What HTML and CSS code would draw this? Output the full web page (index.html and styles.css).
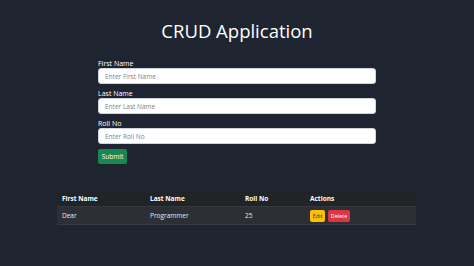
FILE: index.html
```html
<!DOCTYPE html>
<html>
<head>
<meta charset="utf-8">
<link rel="stylesheet" href="styles.css">
</head>
<body>
<div class="page">
  <h1 class="title">CRUD Application</h1>
  <form class="form">
    <label class="field">
      <span class="label">First Name</span>
      <input class="input" type="text" placeholder="Enter First Name">
    </label>
    <label class="field">
      <span class="label">Last Name</span>
      <input class="input" type="text" placeholder="Enter Last Name">
    </label>
    <label class="field">
      <span class="label">Roll No</span>
      <input class="input" type="text" placeholder="Enter Roll No">
    </label>
    <button class="btn btn-submit" type="button">Submit</button>
  </form>
  <table class="table">
    <thead>
      <tr><th class="c1">First Name</th><th class="c2">Last Name</th><th class="c3">Roll No</th><th class="c4">Actions</th></tr>
    </thead>
    <tbody>
      <tr><td>Dear</td><td>Programmer</td><td>25</td><td><span class="actions"><button class="btn btn-edit" type="button">Edit</button><button class="btn btn-delete" type="button">Delete</button></span></td></tr>
    </tbody>
  </table>
</div>
</body>
</html>
```
FILE: styles.css
```css
html, body {
  margin: 0;
  padding: 0;
  background: #1e2430;
  height: 100%;
}
body {
  font-family: "Open Sans", "Noto Sans", sans-serif;
  color: #ffffff;
}
.page {
  display: flex;
  flex-direction: column;
  align-items: center;
}
.title {
  margin: 18px 0 0 0;
  font-size: 18.5px;
  font-weight: 400;
  line-height: 26px;
}
.form {
  width: 278px;
  margin: 15px 0 0 98px;
  display: flex;
  flex-direction: column;
  align-self: flex-start;
}
.field {
  display: flex;
  flex-direction: column;
  margin-bottom: 5px;
}
.label {
  font-size: 7px;
  line-height: 9px;
}
.input {
  height: 16px;
  box-sizing: border-box;
  border: 1px solid #ced4da;
  border-radius: 3px;
  background: #ffffff;
  font-family: inherit;
  font-size: 6.5px;
  padding: 0 6px;
  outline: none;
}
.input::placeholder {
  color: #7d848b;
}
.btn {
  font-family: inherit;
  border: none;
  border-radius: 2px;
  cursor: pointer;
  padding: 0;
}
.btn-submit {
  align-self: flex-start;
  background: #198754;
  color: #fff;
  font-size: 6.5px;
  height: 15px;
  width: 29px;
}
.table {
  width: 359px;
  margin: 27px 0 0 57px;
  border-collapse: collapse;
  align-self: flex-start;
  font-size: 6.5px;
}
.table th {
  text-align: left;
  background: #212427;
  font-weight: 700;
  height: 15px;
  padding: 0 0 0 5px;
  border-bottom: 1px solid #32383e;
}
.table td {
  background: #2c3034;
  color: #e8e8e8;
  height: 17px;
  padding: 0 0 0 5px;
  border-bottom: 1px solid #373b3e;
}
.c1 { width: 83px; }
.c2 { width: 90px; }
.c3 { width: 60px; }
.actions {
  display: flex;
  gap: 3px;
}
.btn-edit {
  background: #ffc107;
  color: #333;
  font-size: 5.5px;
  width: 15px;
  height: 12px;
}
.btn-delete {
  background: #dc3545;
  color: #fff;
  font-size: 5.5px;
  width: 22px;
  height: 12px;
}
```
